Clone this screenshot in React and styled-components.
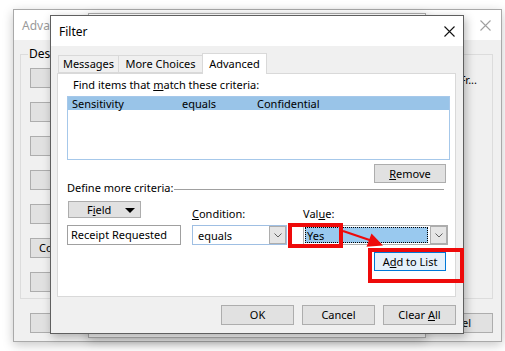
import React from 'react';
import styled, { createGlobalStyle } from 'styled-components';

const GlobalStyle = createGlobalStyle`
  html, body {
    margin: 0;
    padding: 0;
    background: #fff;
  }
  body {
    font-family: "Noto Sans", "Open Sans", sans-serif;
    font-size: 11px;
    color: #000;
  }
  * {
    box-sizing: border-box;
  }
`;

const Desktop = styled.div`
  position: relative;
  width: 505px;
  height: 351px;
  overflow: hidden;
  background: #fff;
`;

// windows sit on a free canvas, so they get coordinates
const Window = styled.div`
  position: absolute;
  left: ${p => p.$x}px;
  top: ${p => p.$y}px;
  width: ${p => p.$w}px;
  height: ${p => p.$h}px;
  display: flex;
  flex-direction: column;
  background: #f0f0f0;
  border: 1px solid ${p => (p.$active ? '#5f5f5f' : '#a9a9a9')};
  box-shadow: ${p => (p.$active ? '2px 3px 9px rgba(0,0,0,0.28)' : '0 3px 10px rgba(0,0,0,0.22)')};
`;

const TitleBar = styled.div`
  height: 30px;
  flex: none;
  display: flex;
  align-items: center;
  padding-left: 8px;
  background: #fff;
  color: ${p => (p.$active ? '#000' : '#9a9a9a')};
  font-size: 12px;
  white-space: nowrap;
  overflow: hidden;
`;

const CloseBox = styled.div`
  margin-left: auto;
  width: ${p => p.$w || 28}px;
  height: 30px;
  display: flex;
  align-items: center;
  justify-content: center;
  flex: none;
`;

const CloseIcon = ({ color }) => (
  <svg width="11" height="11" viewBox="0 0 11 11">
    <path d="M0.5 0.5 L10.5 10.5 M10.5 0.5 L0.5 10.5" stroke={color} strokeWidth="1.1" fill="none" />
  </svg>
);

/* ---------- background window ---------- */

const BackBody = styled.div`
  flex: 1;
  display: flex;
  flex-direction: column;
  padding: 6px 8px 0 6px;
`;

const GroupBox = styled.fieldset`
  margin: 0;
  padding: 6px 9px 6px 9px;
  border: 1px solid #dcdcdc;
  display: flex;
  justify-content: space-between;
  min-width: 0;
`;

const GroupLegend = styled.legend`
  padding: 0 1px;
  margin-left: -2px;
  line-height: 16px;
  font-size: 12px;
`;

const ButtonColumn = styled.div`
  display: flex;
  flex-direction: column;
  gap: 14px;
`;

const SideText = styled.div`
  margin-top: 4px;
  line-height: 16px;
  font-size: 11px;
  padding-right: 6px;
`;

const BackButtons = styled.div`
  display: flex;
  justify-content: space-between;
  margin-top: 14px;
  padding-left: 10px;
`;

const Button = styled.button`
  font: inherit;
  color: #000;
  width: ${p => p.$w || 73}px;
  height: ${p => p.$h || 20}px;
  padding: 0;
  margin: 0;
  background: ${p => (p.$default ? '#e5f1fb' : '#e1e1e1')};
  border: 1px solid ${p => (p.$default ? '#0078d7' : '#adadad')};
  line-height: 16px;
  padding-left: ${p => (p.$align === 'left' ? '8px' : '0')};
  display: flex;
  align-items: center;
  justify-content: ${p => (p.$align === 'left' ? 'flex-start' : 'center')};
  flex: none;
  white-space: nowrap;
  overflow: hidden;
`;

/* ---------- Filter dialog ---------- */

const DialogBody = styled.div`
  flex: 1;
  display: flex;
  flex-direction: column;
  padding: 7px 7px 0 6px;
`;

const TabStrip = styled.div`
  height: 20px;
  display: flex;
  align-items: flex-end;
  padding-left: 1px;
  position: relative;
  z-index: 1;
`;

const Tab = styled.div`
  width: ${p => p.$w}px;
  height: ${p => (p.$selected ? 21 : 18)}px;
  margin-bottom: ${p => (p.$selected ? -1 : 0)}px;
  margin-left: -1px;
  display: flex;
  align-items: ${p => (p.$selected ? 'flex-start' : 'center')};
  padding-top: ${p => (p.$selected ? 2 : 0)}px;
  justify-content: center;
  line-height: 16px;
  background: ${p => (p.$selected ? '#fff' : '#f0f0f0')};
  border: 1px solid #d9d9d9;
  border-bottom: ${p => (p.$selected ? 'none' : '1px solid #d9d9d9')};
  &:first-child {
    margin-left: 0;
  }
`;

const TabPanel = styled.div`
  height: 224px;
  background: #fff;
  border: 1px solid #d9d9d9;
  display: flex;
  flex-direction: column;
  padding: 3px 5px 0 9px;
`;

const PanelLabel = styled.div`
  margin-left: 6px;
  line-height: 16px;
  height: 16px;
`;

const ListBox = styled.div`
  margin-top: 3px;
  height: 64px;
  border: 1px solid #a6c8ea;
`;

const ListRow = styled.div`
  display: grid;
  grid-template-columns: 110px 75px 1fr;
  height: 13px;
  line-height: 13px;
  padding-left: 4px;
  background: ${p => (p.$selected ? '#99c4e8' : 'transparent')};
`;

const RightAction = styled.div`
  display: flex;
  justify-content: flex-end;
  margin-top: ${p => p.$top}px;
  padding-right: 4px;
`;

const SectionHead = styled.div`
  height: 12px;
  display: flex;
  align-items: center;
  line-height: 12px;
  padding-right: 6px;
  margin-top: -1px;
`;

const Rule = styled.div`
  flex: 1;
  margin-left: 1px;
  margin-top: 2px;
  border-top: 1px solid #a0a0a0;
`;

const CriteriaGrid = styled.div`
  margin-top: 7px;
  display: grid;
  grid-template-columns: 125px 111px 145px;
  grid-template-rows: 21px 20px;
  row-gap: 3px;
`;

const FieldButton = styled(Button)`
  margin-left: 1px;
  align-self: start;
  justify-content: flex-start;
  padding-left: 18px;
  gap: 14px;
`;

const Caret = styled.span`
  width: 0;
  height: 0;
  border-left: 5px solid transparent;
  border-right: 5px solid transparent;
  border-top: 5px solid #000;
  margin-top: 1px;
`;

const ColumnLabel = styled.div`
  align-self: end;
  line-height: 16px;
`;

const TextBox = styled.div`
  width: 114px;
  height: 20px;
  border: 1px solid #a0a0a0;
  background: #fff;
  line-height: 18px;
  padding-left: 3px;
`;

const Combo = styled.div`
  width: ${p => p.$w}px;
  height: 20px;
  border: 1px solid ${p => (p.$focus ? '#9fbfe3' : '#adadad')};
  background: #fff;
  display: flex;
  padding: 1px;
`;

const ComboText = styled.div`
  flex: 1;
  line-height: 16px;
  margin-right: 2px;
  background: ${p => (p.$selected ? '#99c9ef' : 'transparent')};
  border: 1px dotted ${p => (p.$selected ? '#000' : 'transparent')};
  padding-left: ${p => (p.$selected ? 1 : 3)}px;
`;

const ComboButton = styled.div`
  width: 17px;
  margin: -1px -1px -1px 0;
  border: 1px solid #adadad;
  background: #e5e5e5;
  display: flex;
  align-items: center;
  justify-content: center;
`;

const Chevron = () => (
  <svg width="8" height="5" viewBox="0 0 8 5">
    <path d="M0.5 0.5 L4 4 L7.5 0.5" stroke="#606060" strokeWidth="1" fill="none" />
  </svg>
);

const DialogButtons = styled.div`
  display: flex;
  justify-content: flex-end;
  gap: 8px;
  margin-top: 8px;
`;

/* ---------- annotations ---------- */

const Highlight = styled.div`
  position: absolute;
  left: ${p => p.$x}px;
  top: ${p => p.$y}px;
  width: ${p => p.$w}px;
  height: ${p => p.$h}px;
  border: 4px solid #ee0a0a;
  z-index: 5;
  pointer-events: none;
`;

const ArrowLayer = styled.svg`
  position: absolute;
  left: 0;
  top: 0;
  z-index: 6;
  pointer-events: none;
`;

export default function App() {
  return (
    <Desktop>
      <GlobalStyle />

      <Window $x={13} $y={9} $w={489} $h={333}>
        <TitleBar>
          Advanced Find
          <CloseBox $w={32}>
            <CloseIcon color="#a0a0a0" />
          </CloseBox>
        </TitleBar>
        <BackBody>
          <GroupBox>
            <GroupLegend>Description</GroupLegend>
            <ButtonColumn>
              <Button $w={75} />
              <Button $w={75} />
              <Button $w={75} />
              <Button $w={75} />
              <Button $w={75} />
              <Button $w={75} $align="left">
                <span>Copy</span>
              </Button>
              <Button $w={75} />
            </ButtonColumn>
            <SideText>Fr...</SideText>
          </GroupBox>
          <BackButtons>
            <Button $w={75} />
            <Button $w={78}>
              <span>Cancel</span>
            </Button>
          </BackButtons>
        </BackBody>
      </Window>

      <Window $x={88} $y={13} $w={338} $h={325}>
        <TitleBar />
      </Window>

      <Window $x={50} $y={15} $w={414} $h={319} $active>
        <TitleBar $active>
          Filter
          <CloseBox>
            <CloseIcon color="#111" />
          </CloseBox>
        </TitleBar>
        <DialogBody>
          <TabStrip>
            <Tab $w={61}>Messages</Tab>
            <Tab $w={85}>More Choices</Tab>
            <Tab $w={65} $selected>Advanced</Tab>
          </TabStrip>
          <TabPanel>
            <PanelLabel>
              Find items that <u>m</u>atch these criteria:
            </PanelLabel>
            <ListBox>
              <ListRow $selected>
                <span>Sensitivity</span>
                <span>equals</span>
                <span>Confidential</span>
              </ListRow>
            </ListBox>
            <RightAction $top={4}>
              <Button $w={72} $h={19}>
                <span>
                  <u>R</u>emove
                </span>
              </Button>
            </RightAction>
            <SectionHead>
              Define more criteria:
              <Rule />
            </SectionHead>
            <CriteriaGrid>
              <FieldButton $h={17}>
                <span>
                  F<u>i</u>eld
                </span>
                <Caret />
              </FieldButton>
              <ColumnLabel>
                <u>C</u>ondition:
              </ColumnLabel>
              <ColumnLabel>
                Val<u>u</u>e:
              </ColumnLabel>
              <TextBox>Receipt Requested</TextBox>
              <Combo $w={95} $focus>
                <ComboText>equals</ComboText>
                <ComboButton>
                  <Chevron />
                </ComboButton>
              </Combo>
              <Combo $w={145}>
                <ComboText $selected>Yes</ComboText>
                <ComboButton>
                  <Chevron />
                </ComboButton>
              </Combo>
            </CriteriaGrid>
            <RightAction $top={7}>
              <Button $w={72} $h={19} $default>
                <span>
                  A<u>d</u>d to List
                </span>
              </Button>
            </RightAction>
          </TabPanel>
          <DialogButtons>
            <Button>
              <span>OK</span>
            </Button>
            <Button>
              <span>Cancel</span>
            </Button>
            <Button>
              <span>
                Clear <u>A</u>ll
              </span>
            </Button>
          </DialogButtons>
        </DialogBody>
      </Window>

      <Highlight $x={288} $y={223} $w={55} $h={25} />
      <Highlight $x={368} $y={248} $w={96} $h={35} />
      <ArrowLayer width="505" height="351" viewBox="0 0 505 351">
        <line x1="343" y1="231" x2="371" y2="240.5" stroke="#ee0a0a" strokeWidth="2.2" />
        <polygon points="383,245.5 366.5,246.8 371.5,233.6" fill="#ee0a0a" />
      </ArrowLayer>
    </Desktop>
  );
}
